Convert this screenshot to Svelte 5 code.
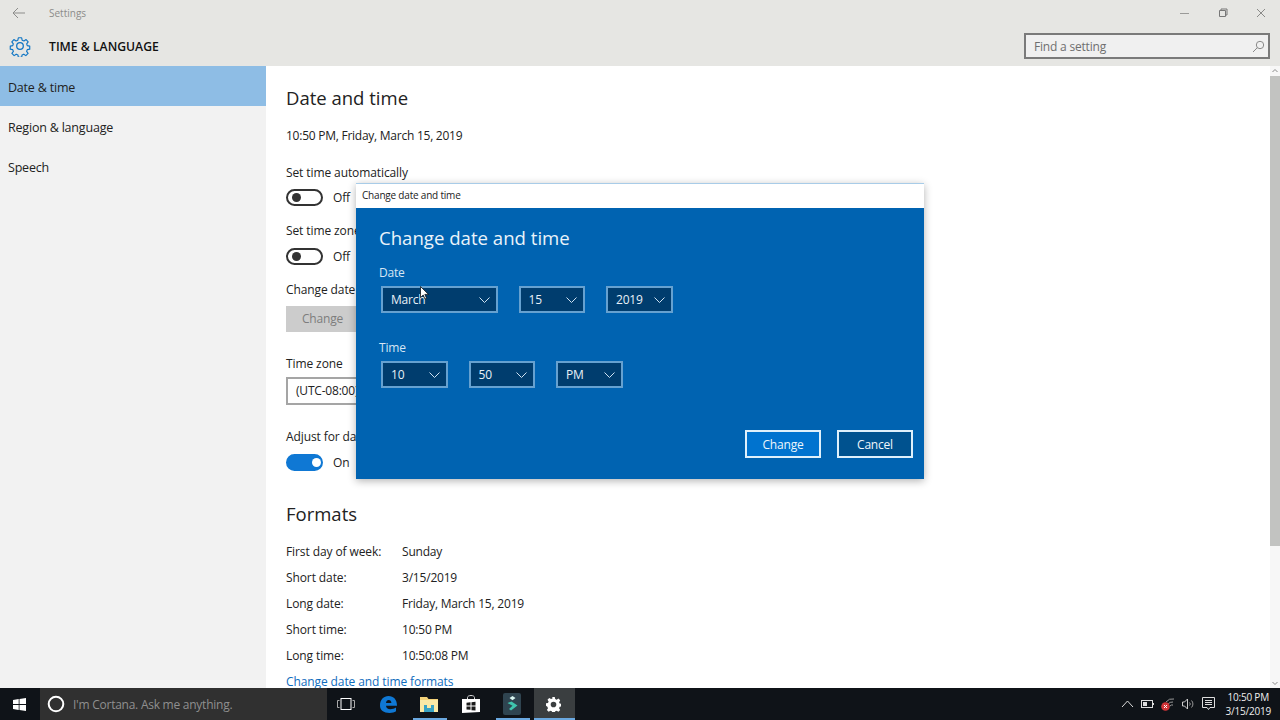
<script>
  const navItems = [
    { label: 'Date & time', active: true },
    { label: 'Region & language', active: false },
    { label: 'Speech', active: false }
  ];
  const formats = [
    ['First day of week:', 'Sunday'],
    ['Short date:', '3/15/2019'],
    ['Long date:', 'Friday, March 15, 2019'],
    ['Short time:', '10:50 PM'],
    ['Long time:', '10:50:08 PM']
  ];
  const dateSel = [
    { v: 'March', wide: true },
    { v: '15', wide: false },
    { v: '2019', wide: false }
  ];
  const timeSel = [
    { v: '10', wide: false },
    { v: '50', wide: false },
    { v: 'PM', wide: false }
  ];
</script>

{#snippet select(s)}
  <div class="sel" class:wide={s.wide}>
    <span>{s.v}</span>
    <svg width="11" height="6" viewBox="0 0 11 6"><path d="M.5.500l5 5 5-5" fill="none" stroke="#cfe2f2"/></svg>
  </div>
{/snippet}

<div class="screen">
  <div class="window">
    <header class="header">
      <div class="titlebar">
        <svg class="back" width="14" height="12" viewBox="0 0 14 12"><path d="M6 1 1 6l5 5M1 6h12" fill="none" stroke="#8d8d8b" stroke-width="1"/></svg>
        <span class="apptitle">Settings</span>
        <div class="winbtns">
          <svg width="10" height="10" viewBox="0 0 10 10"><path d="M0 5.500h9" stroke="#9a9a98" fill="none"/></svg>
          <svg width="10" height="10" viewBox="0 0 10 10"><path d="M1.500 2.500h6v6h-6zM3 2.500V1h6v6H7.500" stroke="#777" fill="none"/></svg>
          <svg width="10" height="10" viewBox="0 0 10 10"><path d="M1 1l8 8M9 1l-8 8" stroke="#8a8a88" fill="none"/></svg>
        </div>
      </div>
      <div class="headrow">
        <svg class="gear" width="22" height="22" viewBox="0 0 24 24" fill="none" stroke="#0f75c4" stroke-width="1.400" stroke-linejoin="round">
          <circle cx="12" cy="12" r="3.600"/>
          <path d="M10 2h4l.6 3 2.200.9 2.600-1.700 2.500 2.900-1.800 2.400.7 2.100 3 .6v3.600l-3 .6-.8 2.100 1.800 2.500-2.700 2.700-2.500-1.800-2.100.9-.5 3h-4l-.5-3-2.100-.9-2.500 1.800-2.700-2.700 1.800-2.500-.8-2.100-3-.6v-3.600l3-.6.700-2.100-1.800-2.400 2.500-2.900 2.600 1.700 2.200-.9z" transform="translate(1.200 1.200) scale(.9)"/>
        </svg>
        <h1 class="section">TIME &amp; LANGUAGE</h1>
        <div class="search">
          <span>Find a setting</span>
          <svg width="13" height="13" viewBox="0 0 13 13" fill="none" stroke="#8a8a8a"><circle cx="8" cy="5" r="3.700"/><path d="M5.300 7.700 1 12"/></svg>
        </div>
      </div>
    </header>

    <div class="body">
      <nav class="sidebar">
        {#each navItems as item}
          <div class="navitem" class:active={item.active}>{item.label}</div>
        {/each}
      </nav>

      <main class="main">
        <h2 class="h1">Date and time</h2>
        <p class="now">10:50 PM, Friday, March 15, 2019</p>

        <div class="label first">Set time automatically</div>
        <div class="toggle-row tight"><span class="toggle"><i></i></span><span>Off</span></div>

        <div class="label second">Set time zone automatically</div>
        <div class="toggle-row"><span class="toggle"><i></i></span><span>Off</span></div>

        <div class="label third">Change date and time</div>
        <div class="disabled-btn">Change</div>

        <div class="label fourth">Time zone</div>
        <div class="tzselect">(UTC-08:00) Pacific Time (US &amp; Canada)</div>

        <div class="label fifth">Adjust for daylight saving time automatically</div>
        <div class="toggle-row"><span class="toggle on"><i></i></span><span>On</span></div>

        <h2 class="h1 formats">Formats</h2>
        <dl class="fmt">
          {#each formats as f}
            <dt>{f[0]}</dt><dd>{f[1]}</dd>
          {/each}
        </dl>
        <div class="link">Change date and time formats</div>
      </main>

      <div class="scrollbar">
        <svg width="10" height="10" viewBox="0 0 10 10"><path d="M2.500 6 5 3.500 7.500 6" fill="none" stroke="#8a8a8a"/></svg>
        <div class="thumb"></div>
        <svg class="down" width="10" height="10" viewBox="0 0 10 10"><path d="M2.500 4 5 6.500 7.500 4" fill="none" stroke="#8a8a8a"/></svg>
      </div>
    </div>
  </div>

  <footer class="taskbar">
    <div class="start">
      <svg width="13" height="13" viewBox="0 0 13 13" fill="#fff"><path d="M0 2 5.700 1.100v5H0zM6.500 1l6.500-1v6.100H6.500zM0 6.900h5.700v5L0 11zM6.500 6.900H13V13l-6.500-1z"/></svg>
    </div>
    <div class="cortana">
      <svg width="18" height="18" viewBox="0 0 18 18"><circle cx="9" cy="9" r="7.300" fill="none" stroke="#fff" stroke-width="2"/></svg>
      <span>I'm Cortana. Ask me anything.</span>
    </div>
    <div class="apps">
      <div class="app view">
        <svg width="18" height="12" viewBox="0 0 18 12" fill="none" stroke="#fff"><rect x="4" y=".5" width="10" height="11"/><path d="M2.500 2.500H.5v7h2M15.500 2.500h2v7h-2" stroke="#aaa"/></svg>
      </div>
      <div class="app">
        <svg width="17" height="17" viewBox="0 0 17 17"><path fill-rule="evenodd" fill="#0f78d4" d="M0 9.500C0 3.800 3.700 0 8.500 0 13.700 0 17 3.500 17 9.800H6c.2 2.300 1.700 3.400 4.300 3.400 2.200 0 4-.6 5.700-1.600v3.700c-1.600.9-3.700 1.700-6.400 1.700C3.600 17 0 14.200 0 9.500zM6 7h5.400C11.300 5.200 10.300 4 8.700 4 7.200 4 6.200 5.200 6 7z"/></svg>
      </div>
      <div class="app running">
        <svg width="18" height="15" viewBox="0 0 18 15"><path d="M0 0h7l1.500 2H18v13H0z" fill="#f3d27a"/><path d="M0 3h18v12H0z" fill="#fbe9a6"/><path d="M4 8h10v7H4z" fill="#39a3c4"/><path d="M7 8h4v3H7z" fill="#fbe9a6"/></svg>
      </div>
      <div class="app">
        <svg width="18" height="18" viewBox="0 0 18 18"><path d="M5.500 5V2.500C5.500 1.300 7 .5 9 .5s3.500.8 3.500 2V5" fill="none" stroke="#ddd"/><path d="M0 4h18v13l-18 1z" fill="#fff"/><path d="M4.500 7.700l4-.4v3.200h-4zM9.500 7.200l4-.4v3.700h-4zM4.500 11.500h4v3.200l-4-.3zM9.500 11.500h4v4l-4-.3z" fill="#1a1a1a"/></svg>
      </div>
      <div class="app running">
        <svg width="18" height="22" viewBox="0 0 18 22"><rect width="18" height="22" rx="2" fill="#2f4450"/><path d="M6.500 5 9.500 3l3 2-3 2.200z" fill="#d8f4f0"/><path d="M4.500 10l4-1.500 6 4-6.500 5L6 16l3.500-3.200z" fill="#3fc4ae"/></svg>
      </div>
      <div class="app running focused">
        <svg width="15" height="15" viewBox="0 0 24 24"><path fill="#fff" fill-rule="evenodd" d="M10 0h4l.7 3.300 2.300 1 2.900-1.800 2.800 2.800-1.800 2.900 1 2.300 3.100.5v4l-3.100.7-1 2.300 1.800 2.800-2.800 2.800-2.900-1.800-2.300 1-.7 3.200h-4l-.6-3.200-2.400-1-2.800 1.800-2.800-2.800 1.800-2.800-1-2.300L0 14v-4l3.200-.5 1-2.300-1.800-2.900 2.800-2.800 2.800 1.800 2.400-1zM12 7.500a4.500 4.500 0 1 0 0 9 4.500 4.500 0 0 0 0-9z"/></svg>
      </div>
    </div>
    <div class="tray">
      <svg width="13" height="8" viewBox="0 0 13 8"><path d="M1 7l5.500-6L12 7" fill="none" stroke="#ddd"/></svg>
      <svg width="13" height="8" viewBox="0 0 13 8"><rect x=".5" y=".5" width="11" height="7" fill="none" stroke="#ddd"/><rect x="2" y="2" width="4" height="4" fill="#ddd"/><path d="M12 3h1v2h-1z" fill="#ddd"/></svg>
      <svg width="14" height="14" viewBox="0 0 14 14"><path d="M5 5a8 8 0 0 1 8-3M7 7a6 6 0 0 1 5-2M9 9a3 3 0 0 1 3-1" fill="none" stroke="#999"/><circle cx="4.500" cy="9.500" r="4.300" fill="#d13438"/><path d="M3 8l3 3M6 8l-3 3" stroke="#fff"/></svg>
      <svg width="13" height="12" viewBox="0 0 13 12" fill="none" stroke="#ccc"><path d="M.5 4v4h2l3 3V1l-3 3z"/><path d="M7.500 4.500a2 2 0 0 1 0 3M9.500 2.500a5 5 0 0 1 0 7" stroke="#999"/></svg>
      <svg width="13" height="14" viewBox="0 0 13 14" fill="none" stroke="#ddd"><path d="M.5.500h12v10H8l-1.500 2-1.500-2H.5zM3 3.500h7M3 5.500h7M3 7.500h7"/></svg>
      <div class="clock"><span>10:50 PM</span><span>3/15/2019</span></div>
    </div>
  </footer>

  <div class="dialog">
    <div class="dlg-title">Change date and time</div>
    <div class="dlg-body">
      <h2 class="dlg-h">Change date and time</h2>
      <div class="dlg-label">Date</div>
      <div class="selects">
        {#each dateSel as s}{@render select(s)}{/each}
      </div>
      <div class="dlg-label time">Time</div>
      <div class="selects">
        {#each timeSel as s}{@render select(s)}{/each}
      </div>
      <div class="actions">
        <div class="btn primary">Change</div>
        <div class="btn">Cancel</div>
      </div>
    </div>
  </div>

  <svg class="cursor" width="10" height="14" viewBox="0 0 10 14"><path d="M.5.500v11l2.700-2.500 1.800 4 1.600-.7-1.800-3.900H8.500z" fill="#fff" stroke="#000" stroke-width=".7"/></svg>
</div>

<style>
  :global(body) {
    margin: 0;
    background: #fff;
  }
  .screen {
    position: relative;
    width: 1280px;
    height: 720px;
    overflow: hidden;
    display: flex;
    flex-direction: column;
    font-family: "Open Sans", "Noto Sans", sans-serif;
    font-size: 12px;
    letter-spacing: -0.2px;
    color: #222;
  }
  .window {
    height: 688px;
    display: flex;
    flex-direction: column;
  }
  .header {
    height: 66px;
    background: #e6e6e3;
    flex: none;
  }
  .titlebar {
    height: 26px;
    display: flex;
    align-items: center;
    padding-left: 12px;
  }
  .back { margin-right: 23px; }
  .apptitle { font-size: 10px; color: #8c8c8a; letter-spacing: 0; }
  .winbtns {
    margin-left: auto;
    display: flex;
    gap: 28px;
    padding-right: 14px;
  }
  .headrow {
    height: 40px;
    display: flex;
    align-items: center;
    padding-left: 9px;
  }
  .gear { margin-right: 18px; }
  .section {
    margin: 0;
    font-size: 12.200px;
    font-weight: 600;
    letter-spacing: 0;
    color: #111;
  }
  .search {
    margin-left: auto;
    margin-right: 10px;
    width: 246px;
    height: 26px;
    box-sizing: border-box;
    border: 2px solid #7a7a7a;
    background: #f0f0f0;
    display: flex;
    align-items: center;
    justify-content: space-between;
    padding: 0 3px 0 8px;
    color: #6f6f6f;
  }
  .body {
    flex: 1;
    min-height: 0;
    display: flex;
  }
  .sidebar {
    width: 266px;
    flex: none;
    background: #f2f2f2;
  }
  .navitem {
    height: 40px;
    line-height: 44px;
    padding-left: 8px;
    font-size: 12.500px;
    color: #222;
    box-sizing: border-box;
    overflow: hidden;
  }
  .navitem.active { background: #8ebde5; }
  .main {
    flex: 1;
    min-width: 0;
    overflow: hidden;
    padding-left: 20px;
    background: #fff;
  }
  .h1 {
    margin: 0;
    font-weight: 400;
    font-size: 18.500px;
    letter-spacing: 0;
    line-height: 26px;
    color: #222;
    padding-top: 19px;
  }
  .now { margin: 16px 0 0; line-height: 18px; letter-spacing: -0.25px; }
  .label { line-height: 18px; white-space: nowrap; letter-spacing: -0.1px; }
  .first { margin-top: 19px; }
  .second { margin-top: 16px; }
  .third { margin-top: 16px; }
  .fourth { margin-top: 23px; }
  .fifth { margin-top: 23px; }
  .toggle-row {
    display: flex;
    align-items: center;
    gap: 10px;
    height: 18px;
    margin-top: 7px;
  }
  .toggle-row.tight { margin-top: 6px; }
  .toggle {
    width: 37px;
    height: 17px;
    box-sizing: border-box;
    border: 2px solid #333;
    border-radius: 9px;
    display: flex;
    align-items: center;
    padding-left: 4px;
  }
  .toggle i {
    width: 9px;
    height: 9px;
    border-radius: 50%;
    background: #333;
  }
  .toggle.on {
    background: #0f78d4;
    border-color: #0f78d4;
    padding-left: 24px;
  }
  .toggle.on i { background: #fff; }
  .disabled-btn {
    width: 73px;
    height: 26px;
    line-height: 26px;
    margin-top: 7px;
    background: #ccc;
    color: #7d7d7d;
    text-align: center;
  }
  .tzselect {
    width: 330px;
    height: 28px;
    box-sizing: border-box;
    border: 2px solid #a5a5a5;
    line-height: 24px;
    padding-left: 8px;
    margin-top: 4px;
    white-space: nowrap;
  }
  .h1.formats { padding-top: 30px; }
  .fmt {
    display: grid;
    grid-template-columns: 116px 1fr;
    grid-auto-rows: 26px;
    margin: 12px 0 0;
    line-height: 26px;
  }
  .fmt dt, .fmt dd { margin: 0; }
  .fmt dt { letter-spacing: -0.1px; }
  .link {
    color: #0f6cbd;
    line-height: 18px;
    margin-top: 4px;
    letter-spacing: -0.1px;
    white-space: nowrap;
  }
  .scrollbar {
    width: 10px;
    flex: none;
    background: #f7f7f7;
    display: flex;
    flex-direction: column;
  }
  .thumb {
    height: 470px;
    background: #c2c3c1;
  }
  .down { margin-top: auto; }
  .taskbar {
    height: 32px;
    flex: none;
    background: #0f1318;
    display: flex;
    color: #fff;
  }
  .start {
    width: 40px;
    display: flex;
    align-items: center;
    justify-content: center;
    padding-right: 2px;
    box-sizing: border-box;
  }
  .cortana {
    width: 287px;
    background: #303030;
    display: flex;
    align-items: center;
    gap: 8px;
    padding-left: 7px;
    box-sizing: border-box;
    color: #8f8f8f;
    letter-spacing: -0.25px;
  }
  .apps { display: flex; }
  .app {
    position: relative;
    width: 41.400px;
    display: flex;
    align-items: center;
    justify-content: center;
    box-sizing: border-box;
    padding-right: 2px;
  }
  .app.view { padding-right: 3px; }
  .app.running::after {
    content: "";
    position: absolute;
    left: 3px;
    right: 4px;
    bottom: 0;
    height: 2px;
    background: #6aa8e0;
  }
  .app.focused { background: #3a3e40; }
  .app.focused::after { left: 0; right: 0; }
  .tray {
    margin-left: auto;
    display: flex;
    align-items: center;
    gap: 7px;
    padding-right: 9px;
  }
  .clock {
    display: flex;
    flex-direction: column;
    align-items: center;
    font-size: 10px;
    line-height: 14px;
    color: #eee;
    margin-left: 3px;
  }
  .dialog {
    position: absolute;
    left: 356px;
    top: 183px;
    width: 568px;
    height: 296px;
    display: flex;
    flex-direction: column;
    box-shadow: 0 2px 8px rgba(0, 0, 0, .3);
  }
  .dlg-title {
    height: 25px;
    line-height: 23px;
    background: #fff;
    border-top: 1px solid #a8cce8;
    box-sizing: border-box;
    padding-left: 6px;
    font-size: 10px;
    color: #222;
    flex: none;
  }
  .dlg-body {
    flex: 1;
    background: #0063b1;
    color: #fff;
    padding: 17px 11px 0 23px;
    display: flex;
    flex-direction: column;
  }
  .dlg-h {
    margin: 0;
    font-size: 18.600px;
    letter-spacing: 0;
    font-weight: 400;
    line-height: 26px;
    color: #eaf3fa;
  }
  .dlg-label {
    margin-top: 13px;
    line-height: 18px;
    color: #d6e6f4;
  }
  .dlg-label.time { margin-top: 26px; }
  .selects {
    display: flex;
    gap: 21px;
    margin: 4px 0 0 2px;
  }
  .sel {
    width: 66.500px;
    height: 27px;
    box-sizing: border-box;
    border: 2px solid #66a1d0;
    background: #003d6e;
    color: #e8f0f7;
    display: flex;
    align-items: center;
    justify-content: space-between;
    padding: 0 6px 0 8px;
  }
  .sel.wide { width: 116.500px; }
  .actions {
    margin-top: auto;
    margin-bottom: 21px;
    display: flex;
    justify-content: flex-end;
    gap: 16px;
  }
  .btn {
    width: 76px;
    height: 28px;
    box-sizing: border-box;
    border: 2px solid #dff0fb;
    background: #00528f;
    color: #eef6fb;
    line-height: 25px;
    text-align: center;
  }
  .btn.primary { background: #0073cf; }
  .cursor {
    position: absolute;
    left: 420px;
    top: 286px;
  }
</style>
